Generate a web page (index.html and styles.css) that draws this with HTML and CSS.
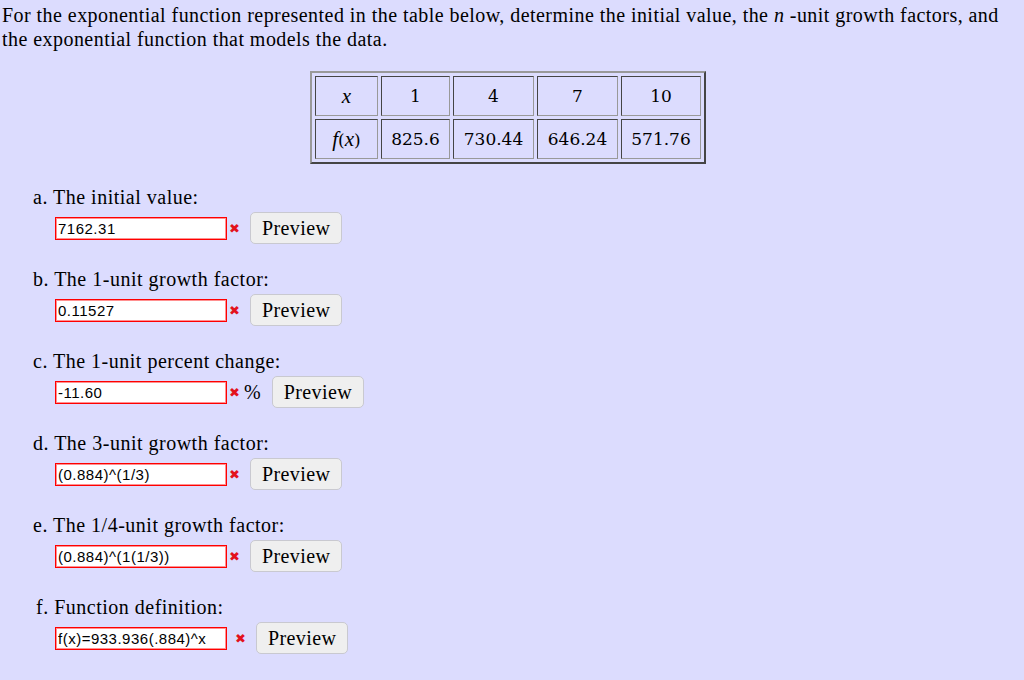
FILE: index.html
```html
<!DOCTYPE html>
<html>
<head>
<meta charset="utf-8">
<link rel="stylesheet" href="styles.css">
</head>
<body>
<div class="page">
  <p class="intro">For the exponential function represented in the table below, determine the initial value, the <span class="mi">n</span> -unit growth factors, and the exponential function that models the data.</p>
  <table class="data">
    <tr><td class="hd"><span class="mx">x</span></td><td class="c1">1</td><td class="c2">4</td><td class="c3">7</td><td class="c4">10</td></tr>
    <tr><td class="hd"><span class="mx">f</span>(<span class="mx">x</span>)</td><td>825.6</td><td>730.44</td><td>646.24</td><td>571.76</td></tr>
  </table>
  <div class="items">
    <div class="item">
      <div class="label">a. The initial value:</div>
      <div class="row"><input class="ans" type="text" value="7162.31"><span class="mark">✖</span><button class="prev">Preview</button></div>
    </div>
    <div class="item">
      <div class="label">b. The 1-unit growth factor:</div>
      <div class="row"><input class="ans" type="text" value="0.11527"><span class="mark">✖</span><button class="prev">Preview</button></div>
    </div>
    <div class="item">
      <div class="label">c. The 1-unit percent change:</div>
      <div class="row"><input class="ans" type="text" value="-11.60"><span class="mark">✖</span><span class="pct">%</span><button class="prev">Preview</button></div>
    </div>
    <div class="item">
      <div class="label">d. The 3-unit growth factor:</div>
      <div class="row"><input class="ans" type="text" value="(0.884)^(1/3)"><span class="mark">✖</span><button class="prev">Preview</button></div>
    </div>
    <div class="item">
      <div class="label">e. The 1/4-unit growth factor:</div>
      <div class="row"><input class="ans" type="text" value="(0.884)^(1(1/3))"><span class="mark">✖</span><button class="prev">Preview</button></div>
    </div>
    <div class="item">
      <div class="label lf">f. Function definition:</div>
      <div class="row"><input class="ans" type="text" value="f(x)=933.936(.884)^x"><span class="mark wide">✖</span><button class="prev">Preview</button></div>
    </div>
  </div>
</div>
</body>
</html>
```
FILE: styles.css
```css
html, body {
  margin: 0;
  padding: 0;
  background: #dcdcfe;
}
body {
  font-family: "Liberation Serif", "Times New Roman", serif;
  font-size: 20px;
  color: #000;
}
.page {
  width: 1012px;
  padding: 0 2px;
}
.intro {
  margin: 0;
  line-height: 24px;
  padding-top: 3px;
  letter-spacing: 0.45px;
}
.mi {
  font-style: italic;
  font-family: "Liberation Serif", serif;
  font-size: 20px;
}
.data {
  margin: 20px auto 0;
  border: 2px outset #999;
  border-spacing: 3px;
  background: #dcdcfe;
  font-family: "DejaVu Serif", "Liberation Serif", serif;
  font-size: 17px;
  letter-spacing: 0;
}
.mx {
  font-style: italic;
  font-family: "Liberation Serif", serif;
  font-size: 21px;
}
.data td {
  border: 1px inset #999;
  height: 38px;
  padding: 0 6px;
  text-align: center;
}
.data td.hd { width: 49px; }
.data td.c1 { width: 55px; }
.data td.c2, .data td.c3 { width: 67px; }
.data td.c4 { width: 66px; }
.items {
  padding-left: 31px;
  margin-top: 19px;
}
.item {
  margin-bottom: 21px;
}
.label {
  font-size: 20px;
  line-height: 28px;
  letter-spacing: 0.5px;
}
.label.lf {
  padding-left: 3px;
}
.row {
  display: flex;
  align-items: center;
  margin-left: 22px;
  margin-top: 1px;
  height: 32px;
}
.ans {
  width: 172px;
  height: 23px;
  box-sizing: border-box;
  border: 1px solid #f00;
  box-shadow: inset 0 0 0 1px #ff9090;
  background: #fff;
  font-family: "Liberation Sans", Arial, sans-serif;
  font-size: 15px;
  letter-spacing: 0.5px;
  padding: 0 2px;
  margin: 0;
  color: #000;
}
.mark {
  color: #e3121c;
  font-family: "DejaVu Sans", sans-serif;
  font-size: 13px;
  font-weight: bold;
  margin-left: 2px;
  width: 10px;
}
.mark.wide {
  margin-left: 8px;
}
.pct {
  font-size: 20px;
  margin-left: 5px;
}
.prev {
  margin-left: 11px;
  height: 32px;
  padding: 0 11px;
  background: #efefef;
  border: 1px solid #c9c9d0;
  border-radius: 5px;
  font-family: "Liberation Serif", "Times New Roman", serif;
  font-size: 20px;
  letter-spacing: 0.4px;
  color: #000;
}
```
